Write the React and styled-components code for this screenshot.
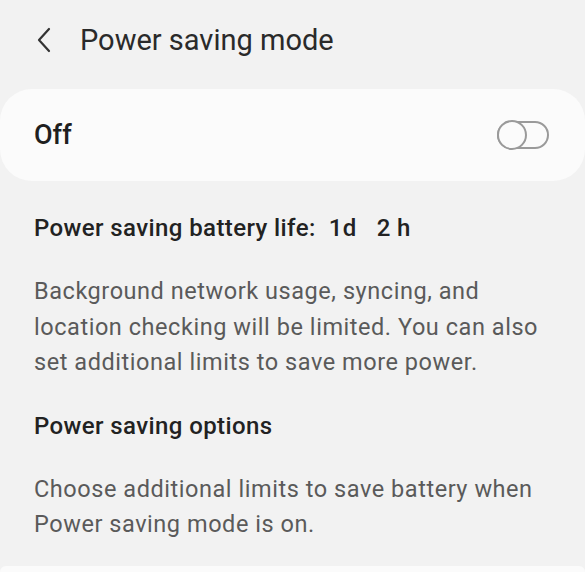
import React from "react";
import styled, { createGlobalStyle } from "styled-components";

const GlobalStyle = createGlobalStyle`
  html, body {
    margin: 0;
    padding: 0;
    background: #f2f2f2;
  }
  body {
    font-family: Roboto, "Noto Sans", "Liberation Sans", sans-serif;
    -webkit-font-smoothing: antialiased;
  }
`;

const Screen = styled.div`
  width: 585px;
  height: 572px;
  overflow: hidden;
  background: #f2f2f2;
  display: flex;
  flex-direction: column;

  & > * {
    flex-shrink: 0;
  }
`;

const Header = styled.div`
  display: flex;
  align-items: center;
  height: 80px;
  padding-left: 32px;
  gap: 24px;
`;

const BackButton = styled.div`
  width: 24px;
  height: 30px;
  display: flex;
  align-items: center;
  justify-content: center;
`;

const Title = styled.h1`
  margin: 0;
  font-size: 29px;
  font-weight: 400;
  color: #2a2a2a;
`;

const Card = styled.div`
  margin-top: 9px;
  height: 92px;
  background: #fbfbfb;
  border-radius: 32px;
  display: flex;
  align-items: center;
  justify-content: space-between;
  padding: 0 36px 0 34px;
`;

const CardLabel = styled.span`
  font-size: 27px;
  font-weight: 500;
  color: #1f1f1f;
`;

const Toggle = styled.div`
  position: relative;
  width: 52px;
  height: 28px;
  border: 2px solid #9a9a9a;
  border-radius: 16px;
  box-sizing: border-box;
`;

const Knob = styled.div`
  position: absolute;
  left: -2px;
  top: -3px;
  width: 30px;
  height: 30px;
  border: 2px solid #9a9a9a;
  border-radius: 50%;
  box-sizing: border-box;
  background: #fbfbfb;
`;

const Section = styled.div`
  padding: 0 34px;
  display: flex;
  flex-direction: column;
`;

const Heading = styled.div`
  font-size: 24px;
  font-weight: 500;
  color: #222;
  line-height: 30px;
  letter-spacing: 0.4px;
  margin-top: ${(p) => p.$top}px;
`;

const Value = styled.span`
  margin-left: ${(p) => p.$gap}px;
`;

const Body = styled.p`
  margin: ${(p) => p.$top}px 0 0;
  font-size: 23.5px;
  line-height: 35.5px;
  letter-spacing: 0.55px;
  color: #5a5a5a;
`;

const BottomCard = styled.div`
  margin-top: auto;
  height: 6px;
  background: #fbfbfb;
  border-radius: 30px 30px 0 0;
`;

export default function App() {
  return (
    <>
      <GlobalStyle />
      <Screen>
        <Header>
          <BackButton>
            <svg width="16" height="26" viewBox="0 0 16 26" fill="none">
              <path
                d="M13 2 L3 13 L13 24"
                stroke="#333"
                strokeWidth="2.2"
                strokeLinecap="round"
                strokeLinejoin="round"
              />
            </svg>
          </BackButton>
          <Title>Power saving mode</Title>
        </Header>
        <Card>
          <CardLabel>Off</CardLabel>
          <Toggle>
            <Knob />
          </Toggle>
        </Card>
        <Section>
          <Heading $top={32}>
            Power saving battery life:
            <Value $gap={13}>1d</Value>
            <Value $gap={20}>2 h</Value>
          </Heading>
          <Body $top={31}>
            Background network usage, syncing, and location checking will be
            limited. You can also set additional limits to save more power.
          </Body>
          <Heading $top={30}>Power saving options</Heading>
          <Body $top={31}>
            Choose additional limits to save battery when Power saving mode is
            on.
          </Body>
        </Section>
        <BottomCard />
      </Screen>
    </>
  );
}
